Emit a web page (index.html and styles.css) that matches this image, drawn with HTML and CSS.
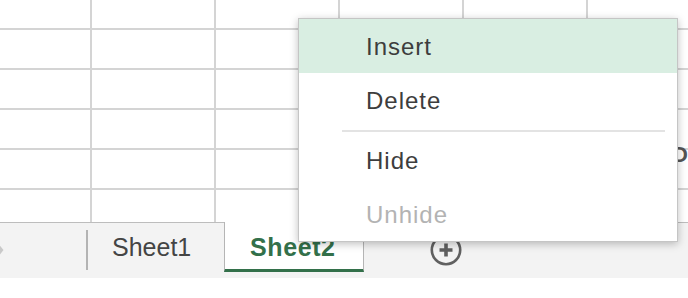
FILE: index.html
```html
<!DOCTYPE html>
<html lang="en">
<head>
  <meta charset="UTF-8">
  <meta name="viewport" content="width=device-width, initial-scale=1.0">
  <title>Sheet tabs</title>
  <link rel="stylesheet" href="styles.css">
</head>
<body>

<div class="app">
  <div class="sheet">
    <div class="cell"></div><div class="cell"></div><div class="cell"></div><div class="cell"></div><div class="cell"></div><div class="cell"></div>
    <div class="cell"></div><div class="cell"></div><div class="cell"></div><div class="cell"></div><div class="cell"></div><div class="cell"></div>
    <div class="cell"></div><div class="cell"></div><div class="cell"></div><div class="cell"></div><div class="cell"></div><div class="cell"></div>
    <div class="cell"></div><div class="cell"></div><div class="cell"></div><div class="cell"></div><div class="cell"></div><div class="cell"></div>
    <div class="cell"></div><div class="cell"></div><div class="cell"></div><div class="cell"></div><div class="cell"></div><div class="cell"><span class="peek">D</span></div>
    <div class="cell"></div><div class="cell"></div><div class="cell"></div><div class="cell"></div><div class="cell"></div><div class="cell"></div>
  </div>

  <div class="tabbar">
    <div class="tab-nav">
      <svg width="10" height="12" viewBox="0 0 10 12">
        <path d="M0 3.5h2.5V1l4 5-4 5V8.5H0z" fill="#c9c9c9"/>
      </svg>
    </div>
    <div class="tab-divider"></div>
    <div class="tab">Sheet1</div>
    <div class="tab active">Sheet2</div>
    <div class="tab-add">
      <svg width="32" height="32" viewBox="0 0 32 32">
        <circle cx="16" cy="16" r="14.2" fill="none" stroke="#606060" stroke-width="2.6"/>
        <path d="M16 9.5v13M9.5 16h13" stroke="#606060" stroke-width="3.6"/>
      </svg>
    </div>
  </div>

  <!-- context menu for the active sheet tab -->
  <div class="menu">
    <div class="menu-item hover">Insert</div>
    <div class="menu-item">Delete</div>
    <div class="menu-sep"></div>
    <div class="menu-item">Hide</div>
    <div class="menu-item disabled">Unhide</div>
  </div>
</div>

</body>
</html>
```

FILE: styles.css
```css
body {
  margin: 0;
  background-color: #fff;
  font-family: "Liberation Sans", Arial, sans-serif;
}
.app {
  position: relative;
  width: 688px;
  height: 298px;
  overflow: hidden;
  background-color: #fff;
}
.sheet {
  display: grid;
  grid-template-columns: 90px repeat(5, 122px);
  grid-template-rows: 28px repeat(4, 38px) 32px;
  gap: 2px;
  width: max-content;
  background-color: #d4d4d4;
}
.cell {
  background-color: #fff;
}
.peek {
  display: block;
  margin-top: -8px;
  padding-left: 84px;
  font-size: 22px;
  font-weight: bold;
  color: #555;
}
.tabbar {
  display: flex;
  height: 55px;
  border-top: 1px solid #bdbdbd;
  background-color: #f3f3f3;
}
.tab-nav {
  width: 86px;
  display: flex;
  align-items: center;
  padding-bottom: 1px;
  box-sizing: border-box;
}
.tab-nav svg {
  margin-left: -3px;
}
.tab-divider {
  width: 2px;
  height: 40px;
  margin-top: 7px;
  background-color: #b3b3b3;
}
.tab {
  width: 136px;
  height: 45px;
  box-sizing: border-box;
  padding: 10px 0 0 24px;
  font-size: 25px;
  line-height: 28px;
  color: #444;
}
.tab.active {
  width: 140px;
  height: 50px;
  margin-top: -1px;
  padding: 11px 0 0 25px;
  background-color: #fff;
  border-left: 1px solid #b5b5b5;
  border-right: 1px solid #b5b5b5;
  border-bottom: 3px solid #33704a;
  font-weight: bold;
  letter-spacing: 0.6px;
  color: #33704a;
}
.tab-add {
  padding: 11px 0 0 66px;
}
.menu {
  position: absolute;
  left: 298px;
  top: 18px;
  width: 380px;
  box-sizing: border-box;
  border: 1px solid #c5c5c5;
  background-color: #fff;
  box-shadow: 0 2px 8px rgba(0, 0, 0, 0.25);
  font-size: 24px;
  letter-spacing: 1px;
}
.menu-item {
  height: 54px;
  box-sizing: border-box;
  padding: 2px 0 0 67px;
  display: flex;
  align-items: center;
  color: #3d3d3d;
}
.menu-item.hover {
  background-color: #d9eee2;
}
.menu-item.disabled {
  color: #b3b3b3;
}
.menu-sep {
  height: 2px;
  margin: 3px 12px 1px 43px;
  background-color: #e3e3e3;
}
```
